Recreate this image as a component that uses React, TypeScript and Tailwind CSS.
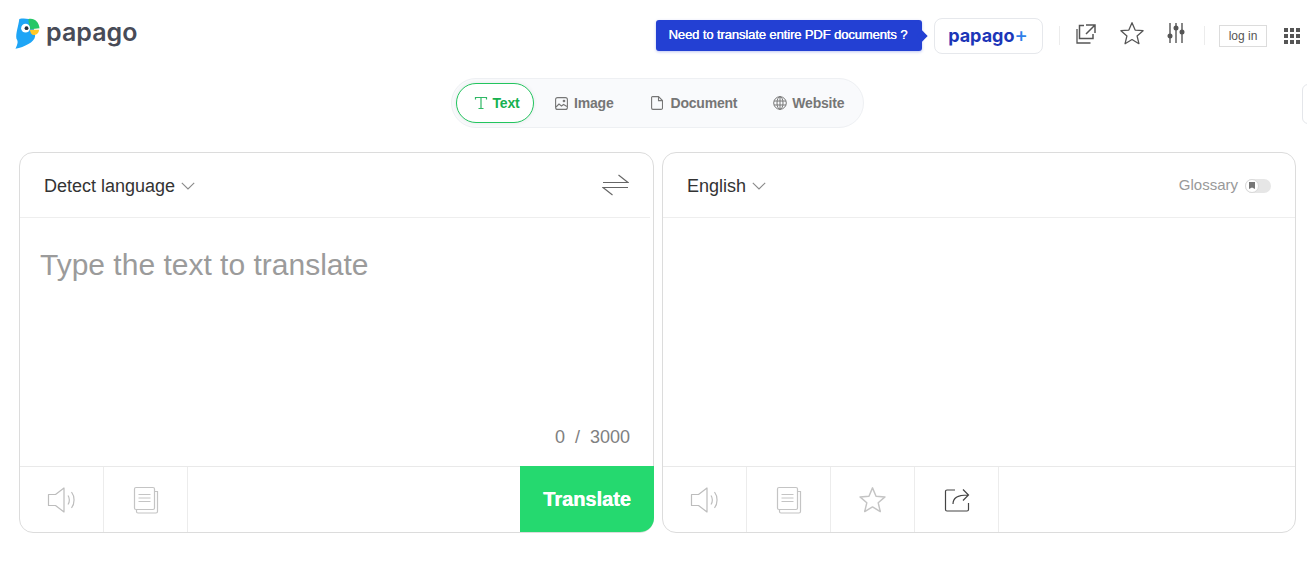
import React from "react";

const Speaker = () => (
  <svg width="30" height="26" viewBox="0 0 30 26" fill="none" stroke="#bdbdbd" strokeWidth="1.2">
    <path d="M1.500 7.500H8.500L17 1v24l-8.500-6.500H1.500z" strokeLinejoin="round" />
    <path d="M21 8.500c1.800 2.500 1.800 6.500 0 9" />
    <path d="M24.500 5c3.400 4.500 3.400 11.500 0 16" />
  </svg>
);
const Copy = () => (
  <svg width="26" height="28" viewBox="0 0 26 28" fill="none" stroke="#c4c4c4" strokeWidth="1.2">
    <rect x="1.5" y="1.5" width="20" height="22" rx="1.5" />
    <path d="M21.5 5.5h3v20a1.5 1.5 0 0 1-1.5 1.5H5a1.5 1.5 0 0 1-1.5-1.5v-2" />
    <path d="M5.5 8.5h12M5.5 12h12M5.5 15.5h12" strokeWidth="1" />
  </svg>
);
const Star = ({ color, w }: { color: string; w: number }) => (
  <svg width={w} height={w} viewBox="0 0 26 26" fill="none" stroke={color} strokeWidth="1.4" strokeLinejoin="round">
    <path d="M13 1.8l3.4 8 8.6.7-6.5 5.7 2 8.4-7.5-4.5-7.5 4.5 2-8.4L1 10.500l8.600-.7z" />
  </svg>
);
const Cell = ({ children }: { children: React.ReactNode }) => (
  <div className="w-[84px] h-full flex items-center justify-center border-r border-[#ececec]">{children}</div>
);
const Chevron = () => (
  <svg width="14" height="8" viewBox="0 0 14 8" fill="none" stroke="#8a8a8a" strokeWidth="1.1" className="-mt-[1px]">
    <path d="M.8.8L7 7l6.200-6.200" />
  </svg>
);

export default function App() {
  return (
    <div className="w-[1307px] h-[576px] bg-white overflow-hidden relative font-['Liberation_Sans',Arial,sans-serif]">
      <header className="h-[78px] flex items-start justify-between pl-[15px] pr-[7px]">
        <div className="flex items-center gap-[6px] mt-[16px]">
          <svg width="25" height="34" viewBox="0 0 26 34">
            <path d="M4.500 2.500C9 1.500 15 2 18 4.500L21 20C20 27 10 31 .5 33.500 3 28 3.500 26 1.500 23 .5 18 3.500 10 4.500 2.500z" fill="#1ea5f6" />
            <path d="M14 2.500c6-1.500 11 3 11.500 9.500L16 13c-1-4-2-7-2-10.500z" fill="#25c766" />
            <circle cx="11" cy="12" r="4.600" fill="#fff" />
            <circle cx="12" cy="12" r="2" fill="#26303c" />
            <path d="M15.500 13.500H25c0 3-2.500 5.500-5.500 5.500-2 0-3.500-2-4-5.500z" fill="#ffc928" />
          </svg>
          <span className="text-[25px] font-['Inter',sans-serif] font-semibold text-[#484b57] leading-none -mt-[2px] tracking-[0.05px]">papago</span>
        </div>
        <div className="flex items-center mt-[18px] h-[36px]">
          <div className="relative h-[31px] w-[266px] mb-[2px] bg-[#2340d3] rounded-[3px] flex items-center pl-[13px] text-white text-[13px] font-medium [text-shadow:0.3px_0_0_#fff] whitespace-nowrap tracking-[-0.1px] shadow-[0_1px_3px_rgba(35,64,211,0.3)]">
            Need to translate entire PDF documents ?
            <span className="absolute right-[-4px] top-[12px] w-[8px] h-[8px] bg-[#2340d3] rotate-45" />
          </div>
          <div className="ml-[12px] w-[109px] h-[36px] pb-[2px] border border-[#e6e8ec] rounded-[8px] flex items-center justify-center font-['Inter',sans-serif] font-bold text-[18px] text-[#1c36b8]">
            papago<span className="text-[#2f7fe8] font-medium text-[20px] leading-none">+</span>
          </div>
          <div className="ml-[16px] w-px h-[19px] mb-[2px] bg-[#ececec]" />
          <svg className="ml-[16px] mb-[6px]" width="21" height="21" viewBox="0 0 21 21" fill="none" stroke="#555" strokeWidth="1.5">
            <path d="M8 2.500H3.500v13H17V11" />
            <path d="M1 6v14h13.500" strokeWidth="1.300" />
            <path d="M10 2h9v8M18.500 2.500L10 11" />
          </svg>
          <span className="ml-[23px] mb-[6px] flex"><Star color="#555" w={24} /></span>
          <svg className="ml-[23px] mb-[6px]" width="18" height="22" viewBox="0 0 18 22" fill="none" stroke="#555" strokeWidth="1.400">
            <path d="M3 1v20M9 1v20M15 1v20" />
            <circle cx="3" cy="14" r="1.800" fill="#555" />
            <circle cx="9" cy="6" r="1.800" fill="#555" />
            <circle cx="15" cy="10" r="1.800" fill="#555" />
          </svg>
          <div className="ml-[19px] w-px h-[19px] mb-[2px] bg-[#ececec]" />
          <div className="ml-[14px] w-[48px] h-[22px] border border-[#dcdcdc] flex items-center justify-center text-[12px] text-[#555] pl-[1px]">log in</div>
          <div className="ml-[17px] grid grid-cols-3 gap-[1.5px]">
            {Array.from({ length: 9 }).map((_, i) => (
              <span key={i} className="w-[4.500px] h-[4.500px] bg-[#555]" />
            ))}
          </div>
        </div>
      </header>

      <nav className="flex justify-center">
        <div className="w-[413px] h-[50px] ml-[8px] rounded-full bg-[#f9fafc] border border-[#eef0f3] flex items-center pl-[4px] text-[14px] tracking-[-0.2px] font-bold text-[#767676]">
          <div className="w-[78px] h-[40px] rounded-full bg-white border border-[#22c55e] text-[#16b14f] flex items-center justify-center gap-[5px] pl-[3px] shadow-[0_0_4px_rgba(0,0,0,0.08)]">
            <svg width="14" height="14" viewBox="0 0 14 14" fill="none" stroke="#2fb865" strokeWidth="1.200">
              <path d="M1.500 3.500V1.500h11v2M7 1.500v11M4.500 12.500h5" />
            </svg>
            Text
          </div>
          <div className="ml-[21px] flex items-center gap-[6px]">
            <svg width="13" height="13" viewBox="0 0 13 13" fill="none" stroke="#767676" strokeWidth="1.100">
              <rect x=".6" y=".6" width="11.800" height="11.800" rx="2" />
              <path d="M1 10l3-3 2.500 2 2-1.500 3.500 2" />
              <circle cx="9" cy="4" r=".8" />
            </svg>
            Image
          </div>
          <div className="ml-[38px] flex items-center gap-[7px]">
            <svg width="12" height="14" viewBox="0 0 12 14" fill="none" stroke="#767676" strokeWidth="1.100">
              <path d="M1.500.6h6l4 4v7.400a1.400 1.400 0 0 1-1.400 1.400H1.900A1.400 1.400 0 0 1 .6 12V1.500A.9.9 0 0 1 1.500.6zM7.500.6v4h4" />
            </svg>
            Document
          </div>
          <div className="ml-[36px] flex items-center gap-[5px]">
            <svg width="14" height="14" viewBox="0 0 14 14" fill="none" stroke="#767676" strokeWidth="1">
              <circle cx="7" cy="7" r="6.300" />
              <ellipse cx="7" cy="7" rx="3" ry="6.300" />
              <path d="M1 5h12M1 9h12M7 .7v12.600" />
            </svg>
            Website
          </div>
        </div>
      </nav>
      <div className="absolute left-[1302px] top-[84px] w-[20px] h-[40px] rounded-[6px] bg-white border border-[#e4e6ea]" />

      <main className="mt-[24px] pl-[19px] flex gap-[8px]">
        <section className="w-[635px] h-[381px] rounded-[14px] border border-[#dcdcdc] flex flex-col bg-white">
          <div className="h-[65px] mr-[3px] border-b border-[#eeeeee] flex items-center justify-between pl-[24px] pr-[21px] shrink-0">
            <div className="flex items-center gap-[6px] text-[18px] text-[#333] pt-[2px]">Detect language <Chevron /></div>
            <svg width="27" height="24" viewBox="0 0 27 24" fill="none" stroke="#666" strokeWidth="1.100">
              <path d="M1 9.500h25L16.500 2M26 14.500H1L10.500 22" />
            </svg>
          </div>
          <div className="flex-1 flex flex-col justify-between pl-[20px] pr-[23px] pt-[28px] pb-[18px]">
            <div className="text-[30px] leading-[38px] text-[#9b9b9b]">Type the text to translate</div>
            <div className="text-right text-[18px] text-[#808080] [word-spacing:5px] translate-y-[3px]">0 / 3000</div>
          </div>
          <div className="h-[66px] shrink-0 border-t border-[#e9e9e9] flex">
            <Cell><Speaker /></Cell>
            <Cell><Copy /></Cell>
            <button className="ml-auto w-[134px] h-[66px] -mt-px -mr-px rounded-br-[14px] bg-[#25d96f] text-white text-[20px] font-bold [text-shadow:0.3px_0_0_#fff]">Translate</button>
          </div>
        </section>
        <section className="w-[634px] h-[381px] rounded-[14px] border border-[#dcdcdc] flex flex-col bg-white">
          <div className="h-[65px] border-b border-[#eeeeee] flex items-center justify-between pl-[24px] pr-[24px] shrink-0">
            <div className="flex items-center gap-[6px] text-[18px] text-[#333] pt-[2px]">English <Chevron /></div>
            <div className="flex items-center gap-[7px] text-[15px] text-[#999] pt-[1px]">
              Glossary
              <span className="w-[26px] h-[14px] rounded-full bg-[#e6e6e6] flex items-center">
                <span className="w-[14px] h-[14px] rounded-full bg-white border border-[#d8d8d8] flex items-center justify-center">
                  <svg width="6" height="7" viewBox="0 0 6 7"><path d="M0 0h6v7L3 5.500 0 7z" fill="#777" /></svg>
                </span>
              </span>
            </div>
          </div>
          <div className="flex-1" />
          <div className="h-[66px] shrink-0 border-t border-[#e9e9e9] flex">
            <Cell><Speaker /></Cell>
            <Cell><Copy /></Cell>
            <Cell><Star color="#c4c4c4" w={27} /></Cell>
            <Cell>
              <svg width="26" height="26" viewBox="0 0 26 26" fill="none" stroke="#444" strokeWidth="1.200">
                <path d="M11 3H3a1.500 1.500 0 0 0-1.500 1.500v18A1.500 1.500 0 0 0 3 24h20a1.500 1.500 0 0 0 1.500-1.500V16" />
                <path d="M9 17c0-6 4-9 15-9M19 2.500L24.500 8 19 13.500" />
              </svg>
            </Cell>
          </div>
        </section>
      </main>
    </div>
  );
}
